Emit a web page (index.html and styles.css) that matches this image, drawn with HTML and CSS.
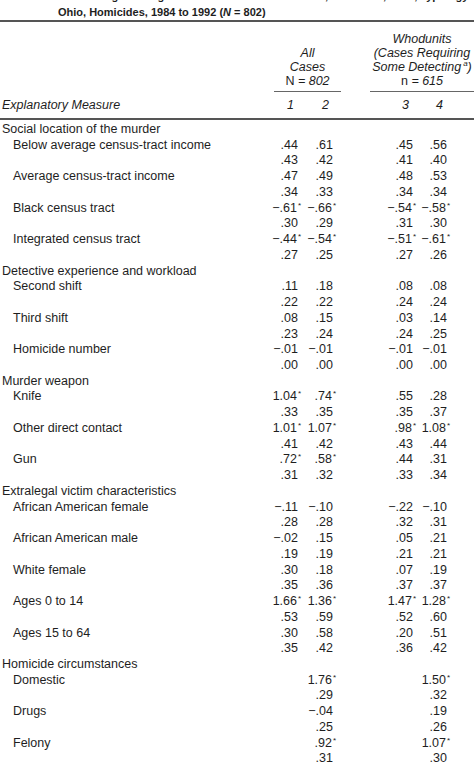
FILE: index.html
```html
<!DOCTYPE html>
<html lang="en">
<head>
<meta charset="utf-8">
<title>Table</title>
<link rel="stylesheet" href="styles.css">
</head>
<body>
<div class="page">
  <div class="caption">
    <p>Table 2 Logistic Regression of Homicide Clearance, Cleveland, Ohio, Typology of Cases, Cleveland,<br>Ohio, Homicides, 1984 to 1992 (<i>N</i> = 802)</p>
  </div>
  <div class="groups">
    <div class="gspace"></div>
    <div class="grp g1">All<br>Cases<br><span class="up">N</span> = 802</div>
    <div class="grp g2">Whodunits<br>(Cases Requiring<br>Some Detecting<sup>a</sup>)<br><span class="up">n</span> = 615</div>
  </div>
  <div class="row colhead">
    <div class="sec">Explanatory Measure</div>
    <div class="h">1</div><div class="h">2</div><div class="h">3</div><div class="h">4</div>
  </div>
  <div class="tbody">
    <div class="row"><div class="sec full">Social location of the murder</div></div>
    <div class="row"><div class="lab">Below average census-tract income</div><div class="v">.44</div><div class="v">.61</div><div class="v">.45</div><div class="v">.56</div></div>
    <div class="row"><div class="lab"></div><div class="v">.43</div><div class="v">.42</div><div class="v">.41</div><div class="v">.40</div></div>
    <div class="row"><div class="lab">Average census-tract income</div><div class="v">.47</div><div class="v">.49</div><div class="v">.48</div><div class="v">.53</div></div>
    <div class="row"><div class="lab"></div><div class="v">.34</div><div class="v">.33</div><div class="v">.34</div><div class="v">.34</div></div>
    <div class="row"><div class="lab">Black census tract</div><div class="v">−.61<span class="a">*</span></div><div class="v">−.66<span class="a">*</span></div><div class="v">−.54<span class="a">*</span></div><div class="v">−.58<span class="a">*</span></div></div>
    <div class="row"><div class="lab"></div><div class="v">.30</div><div class="v">.29</div><div class="v">.31</div><div class="v">.30</div></div>
    <div class="row"><div class="lab">Integrated census tract</div><div class="v">−.44<span class="a">*</span></div><div class="v">−.54<span class="a">*</span></div><div class="v">−.51<span class="a">*</span></div><div class="v">−.61<span class="a">*</span></div></div>
    <div class="row"><div class="lab"></div><div class="v">.27</div><div class="v">.25</div><div class="v">.27</div><div class="v">.26</div></div>

    <div class="row"><div class="sec full">Detective experience and workload</div></div>
    <div class="row"><div class="lab">Second shift</div><div class="v">.11</div><div class="v">.18</div><div class="v">.08</div><div class="v">.08</div></div>
    <div class="row"><div class="lab"></div><div class="v">.22</div><div class="v">.22</div><div class="v">.24</div><div class="v">.24</div></div>
    <div class="row"><div class="lab">Third shift</div><div class="v">.08</div><div class="v">.15</div><div class="v">.03</div><div class="v">.14</div></div>
    <div class="row"><div class="lab"></div><div class="v">.23</div><div class="v">.24</div><div class="v">.24</div><div class="v">.25</div></div>
    <div class="row"><div class="lab">Homicide number</div><div class="v">−.01</div><div class="v">−.01</div><div class="v">−.01</div><div class="v">−.01</div></div>
    <div class="row"><div class="lab"></div><div class="v">.00</div><div class="v">.00</div><div class="v">.00</div><div class="v">.00</div></div>

    <div class="row"><div class="sec full">Murder weapon</div></div>
    <div class="row"><div class="lab">Knife</div><div class="v">1.04<span class="a">*</span></div><div class="v">.74<span class="a">*</span></div><div class="v">.55</div><div class="v">.28</div></div>
    <div class="row"><div class="lab"></div><div class="v">.33</div><div class="v">.35</div><div class="v">.35</div><div class="v">.37</div></div>
    <div class="row"><div class="lab">Other direct contact</div><div class="v">1.01<span class="a">*</span></div><div class="v">1.07<span class="a">*</span></div><div class="v">.98<span class="a">*</span></div><div class="v">1.08<span class="a">*</span></div></div>
    <div class="row"><div class="lab"></div><div class="v">.41</div><div class="v">.42</div><div class="v">.43</div><div class="v">.44</div></div>
    <div class="row"><div class="lab">Gun</div><div class="v">.72<span class="a">*</span></div><div class="v">.58<span class="a">*</span></div><div class="v">.44</div><div class="v">.31</div></div>
    <div class="row"><div class="lab"></div><div class="v">.31</div><div class="v">.32</div><div class="v">.33</div><div class="v">.34</div></div>

    <div class="row"><div class="sec full">Extralegal victim characteristics</div></div>
    <div class="row"><div class="lab">African American female</div><div class="v">−.11</div><div class="v">−.10</div><div class="v">−.22</div><div class="v">−.10</div></div>
    <div class="row"><div class="lab"></div><div class="v">.28</div><div class="v">.28</div><div class="v">.32</div><div class="v">.31</div></div>
    <div class="row"><div class="lab">African American male</div><div class="v">−.02</div><div class="v">.15</div><div class="v">.05</div><div class="v">.21</div></div>
    <div class="row"><div class="lab"></div><div class="v">.19</div><div class="v">.19</div><div class="v">.21</div><div class="v">.21</div></div>
    <div class="row"><div class="lab">White female</div><div class="v">.30</div><div class="v">.18</div><div class="v">.07</div><div class="v">.19</div></div>
    <div class="row"><div class="lab"></div><div class="v">.35</div><div class="v">.36</div><div class="v">.37</div><div class="v">.37</div></div>
    <div class="row"><div class="lab">Ages 0 to 14</div><div class="v">1.66<span class="a">*</span></div><div class="v">1.36<span class="a">*</span></div><div class="v">1.47<span class="a">*</span></div><div class="v">1.28<span class="a">*</span></div></div>
    <div class="row"><div class="lab"></div><div class="v">.53</div><div class="v">.59</div><div class="v">.52</div><div class="v">.60</div></div>
    <div class="row"><div class="lab">Ages 15 to 64</div><div class="v">.30</div><div class="v">.58</div><div class="v">.20</div><div class="v">.51</div></div>
    <div class="row"><div class="lab"></div><div class="v">.35</div><div class="v">.42</div><div class="v">.36</div><div class="v">.42</div></div>

    <div class="row"><div class="sec full">Homicide circumstances</div></div>
    <div class="row"><div class="lab">Domestic</div><div class="v"></div><div class="v">1.76<span class="a">*</span></div><div class="v"></div><div class="v">1.50<span class="a">*</span></div></div>
    <div class="row"><div class="lab"></div><div class="v"></div><div class="v">.29</div><div class="v"></div><div class="v">.32</div></div>
    <div class="row"><div class="lab">Drugs</div><div class="v"></div><div class="v">−.04</div><div class="v"></div><div class="v">.19</div></div>
    <div class="row"><div class="lab"></div><div class="v"></div><div class="v">.25</div><div class="v"></div><div class="v">.26</div></div>
    <div class="row"><div class="lab">Felony</div><div class="v"></div><div class="v">.92<span class="a">*</span></div><div class="v"></div><div class="v">1.07<span class="a">*</span></div></div>
    <div class="row"><div class="lab"></div><div class="v"></div><div class="v">.31</div><div class="v"></div><div class="v">.30</div></div>
  </div>
</div>
</body>
</html>
```

FILE: styles.css
```css
html, body {
  margin: 0;
  padding: 0;
  background: #fff;
}
body {
  color: #1e1e1e;
  font-family: "Liberation Sans", Arial, Helvetica, sans-serif;
  font-size: 12.5px;
}
.page {
  width: 474px;
  height: 764px;
  overflow: hidden;
}
.caption {
  border-bottom: 2px solid #555;
  padding: 0 0 0 58px;
  overflow: hidden;
}
.caption p {
  margin: -12px 0 0;
  font-weight: bold;
  font-size: 11px;
  line-height: 16px;
  white-space: nowrap;
}
.groups {
  display: flex;
  align-items: flex-end;
  padding-top: 10px;
}
.gspace {
  width: 274px;
  flex: none;
}
.grp {
  flex: none;
  text-align: center;
  font-style: italic;
  line-height: 14px;
  border-bottom: 1px solid #666;
  padding-bottom: 3px;
  white-space: nowrap;
}
.grp .up {
  font-style: normal;
}
.grp sup {
  font-size: 8px;
  line-height: 0;
  vertical-align: 5px;
  margin-left: 2px;
}
.g1 {
  width: 67px;
}
.g2 {
  width: 104px;
  margin-left: 29px;
}
.row {
  display: grid;
  grid-template-columns: 1fr 36px 35px 80px 34px 27px;
  line-height: 15.73px;
  white-space: nowrap;
}
.colhead {
  font-style: italic;
  line-height: 15px;
  padding: 6px 0 5px;
  border-bottom: 2px solid #555;
}
.colhead .h {
  text-align: right;
  padding-right: 4px;
}
.tbody {
  padding-top: 2px;
}
.sec {
  padding-left: 2px;
}
.full {
  grid-column: 1 / -1;
}
.lab {
  padding-left: 13px;
}
.v {
  text-align: right;
}
.a {
  display: inline-block;
  width: 0;
  font-size: 8px;
  line-height: 0;
  vertical-align: 4px;
  padding-left: 1px;
}
```
